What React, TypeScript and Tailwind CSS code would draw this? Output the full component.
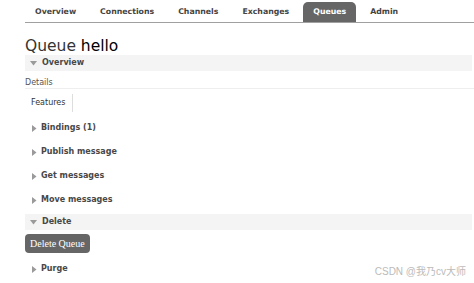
import React from "react";

const tabs = ["Overview", "Connections", "Channels", "Exchanges", "Queues", "Admin"];

function Arrow({ open }: { open?: boolean }) {
  return open ? (
    <svg width="7" height="5" viewBox="0 0 7 5" className="shrink-0">
      <path d="M0 0 L7 0 L3.5 4.5 Z" fill="#9a9a9a" />
    </svg>
  ) : (
    <svg width="5" height="7" viewBox="0 0 5 7" className="shrink-0">
      <path d="M0 0 L4.5 3.5 L0 7 Z" fill="#9a9a9a" />
    </svg>
  );
}

function Section({ title, open }: { title: string; open?: boolean }) {
  if (open) {
    return (
      <div className="ml-[25px] mr-[2px] flex h-[16px] items-center gap-[5px] bg-[#f4f4f4] pl-[5px]">
        <Arrow open />
        <span className="text-[8px] font-bold text-[#484848]">{title}</span>
      </div>
    );
  }
  return (
    <div className="ml-[25px] flex h-[24px] items-center gap-[4px] pl-[7px]">
      <Arrow />
      <span className="text-[8px] font-bold text-[#484848]">{title}</span>
    </div>
  );
}

export default function App() {
  return (
    <div className="relative h-[283px] w-[474px] overflow-hidden bg-white font-['DejaVu_Sans',sans-serif]">
      {/* tabs */}
      <div className="ml-[25px] mt-[2px] flex h-[21px] items-end gap-[4px] border-b border-[#a0a0a0]">
        {tabs.map((t) =>
          t === "Queues" ? (
            <div
              key={t}
              className="flex h-[20px] items-center rounded-t-[5px] bg-[#666] px-[10px] text-[7.8px] font-bold text-white"
            >
              {t}
            </div>
          ) : (
            <div
              key={t}
              className="flex h-[20px] items-center px-[10px] text-[7.8px] font-bold text-[#444]"
            >
              {t}
            </div>
          )
        )}
      </div>

      <h1 className="ml-[25px] mt-[15px] h-[16px] text-[15.5px] leading-[16px] text-[#333]">
        Queue <span className="text-black">hello</span>
      </h1>

      <div className="mt-[1px]">
        <Section title="Overview" open />
      </div>

      <div className="ml-[25px] flex h-[18px] items-end border-b border-[#eee] pb-[1px] text-[8px] leading-none text-[#555]">
        Details
      </div>
      <div className="ml-[31px] mt-[5px] flex h-[18px] w-[42px] items-center border-r border-[#ddd] text-[8px] text-[#333]">
        Features
      </div>

      <div className="mt-[4px]">
        <Section title="Bindings (1)" />
      </div>
      <Section title="Publish message" />
      <Section title="Get messages" />
      <Section title="Move messages" />
      <div className="mt-[2px]">
        <Section title="Delete" open />
      </div>
      <button className="ml-[25px] mt-[4px] flex h-[19px] items-center rounded-[4px] bg-[#666] px-[5px] font-['Liberation_Serif',serif] text-[10px] text-white">
        Delete Queue
      </button>
      <div className="mt-[4px]">
        <Section title="Purge" />
      </div>

      <div className="absolute bottom-[4px] right-[8px] font-['Liberation_Sans','Noto_Sans_CJK_SC',sans-serif] text-[10px] text-[#bbb]">
        CSDN @我乃cv大师
      </div>
    </div>
  );
}
